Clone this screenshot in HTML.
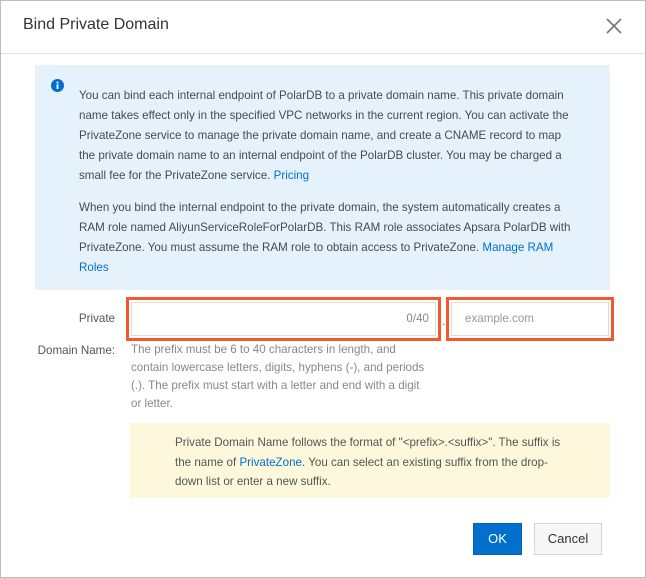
<!DOCTYPE html>
<html><head><style>
*{margin:0;padding:0;box-sizing:border-box}
body{width:646px;height:578px;background:#fff;font-family:"Liberation Sans",sans-serif;position:relative;overflow:hidden;color:#333}
.frame{position:absolute;left:0;top:0;width:646px;height:578px;border:1px solid #bdbdbd}
.a{position:absolute;white-space:nowrap}
.title{left:23px;top:16px;font-size:16px;color:#333}
.hr{position:absolute;left:1px;right:1px;top:53px;height:1px;background:#e3e3e3}
.blue{position:absolute;left:35px;top:65px;width:575px;height:225px;background:#e5f2fc}
.t{font-size:11.6px;line-height:20px;color:#4a4a4a}
a{color:#0070cc;text-decoration:none}
.red{position:absolute;border:3px solid #f05a2d}
.inp{position:absolute;border:1px solid #dcdcdc;background:#fff}
.yellow{position:absolute;left:130px;top:423px;width:480px;height:75px;background:#fdf7dc}
</style></head><body>
<div class="frame"></div>
<div class="a title">Bind Private Domain</div>
<svg class="a" style="left:606px;top:18px" width="16" height="16" viewBox="0 0 16 16"><path d="M1 1L15 15M15 1L1 15" stroke="#777" stroke-width="1.6"/></svg>
<div class="hr"></div>
<div class="blue"></div>
<svg class="a" style="left:51px;top:79px" width="13" height="13" viewBox="0 0 13 13"><circle cx="6.5" cy="6.5" r="6.5" fill="#0070cc"/><rect x="5.6" y="5.3" width="1.8" height="4.7" fill="#fff"/><rect x="5.6" y="2.6" width="1.8" height="1.8" fill="#fff"/></svg>
<div class="a t" style="left:79px;top:86px">You can bind each internal endpoint of PolarDB to a private domain name. This private domain<br>name takes effect only in the specified VPC networks in the current region. You can activate the<br>PrivateZone service to manage the private domain name, and create a CNAME record to map<br>the private domain name to an internal endpoint of the PolarDB cluster. You may be charged a<br>small fee for the PrivateZone service. <a>Pricing</a></div>
<div class="a t" style="left:79px;top:198px">When you bind the internal endpoint to the private domain, the system automatically creates a<br>RAM role named AliyunServiceRoleForPolarDB. This RAM role associates Apsara PolarDB with<br>PrivateZone. You must assume the RAM role to obtain access to PrivateZone. <a>Manage RAM</a><br><a>Roles</a></div>
<div class="a t" style="right:531px;top:309px;color:#555">Private</div>
<div class="a t" style="right:531px;top:341px;color:#555">Domain Name:</div>
<div class="red" style="left:126px;top:297px;width:315px;height:44px"></div>
<div class="inp" style="left:131px;top:302px;width:305px;height:34px"></div>
<div class="a t" style="right:217px;top:309px;color:#888">0/40</div>
<div class="a t" style="left:442px;top:312px;color:#888">.</div>
<div class="red" style="left:446px;top:297px;width:168px;height:44px"></div>
<div class="inp" style="left:451px;top:302px;width:158px;height:34px"></div>
<div class="a t" style="left:465px;top:309px;color:#999">example.com</div>
<div class="a" style="left:131px;top:341px;font-size:11.6px;line-height:18px;color:#888">The prefix must be 6 to 40 characters in length, and<br>contain lowercase letters, digits, hyphens (-), and periods<br>(.). The prefix must start with a letter and end with a digit<br>or letter.</div>
<div class="yellow"></div>
<div class="a" style="left:175px;top:433px;font-size:11.6px;line-height:19.5px;color:#555">Private Domain Name follows the format of "&lt;prefix&gt;.&lt;suffix&gt;". The suffix is<br>the name of <a>PrivateZone</a>. You can select an existing suffix from the drop-<br>down list or enter a new suffix.</div>
<div class="a" style="left:473px;top:523px;width:49px;height:32px;background:#0070cc;border:1px solid #0063b5;color:#fff;font-size:13px;text-align:center;line-height:30px">OK</div>
<div class="a" style="left:534px;top:523px;width:68px;height:32px;background:#f7f7f7;border:1px solid #d5d5d5;color:#333;font-size:13px;text-align:center;line-height:30px">Cancel</div>
</body></html>
